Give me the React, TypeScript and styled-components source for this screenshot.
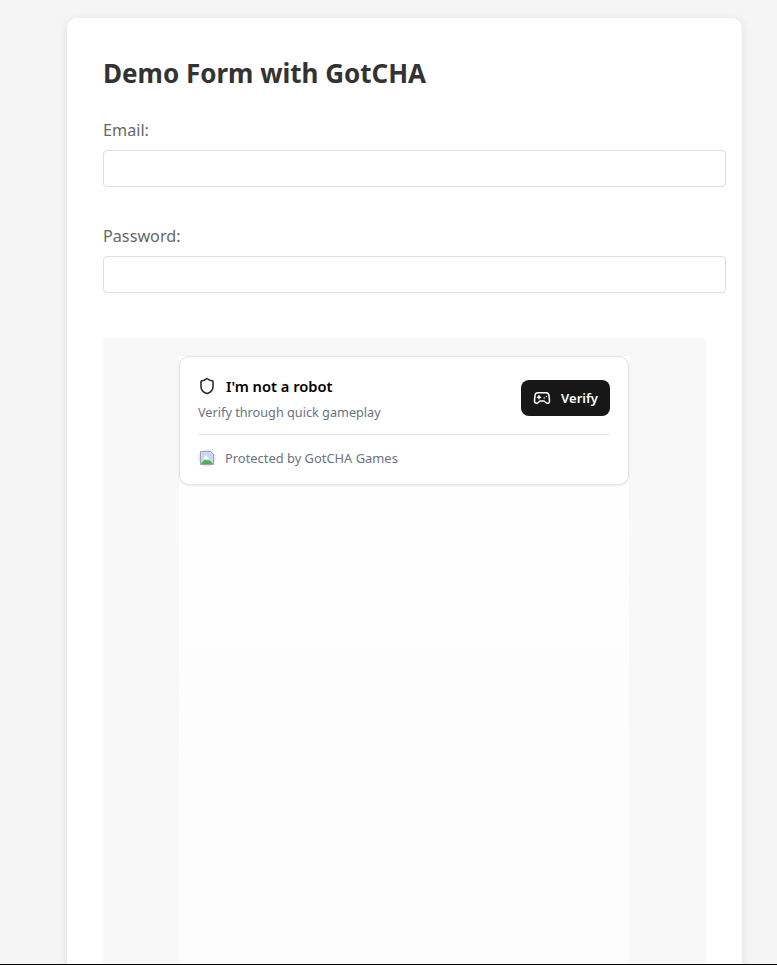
import styled, { createGlobalStyle } from "styled-components";
import { Gamepad2, Shield } from "lucide-react";

const GlobalStyle = createGlobalStyle`
  html, body {
    margin: 0;
    padding: 0;
    background: #f5f5f5;
    font-family: "Noto Sans", "Open Sans", sans-serif;
  }
  * {
    box-sizing: border-box;
  }
`;

const Page = styled.div`
  height: 965px;
  overflow: hidden;
  border-bottom: 1px solid #000;
  padding: 18px 35px 0 67px;
`;

const FormCard = styled.form`
  height: 960px;
  background: #fff;
  border-radius: 10px;
  padding: 35px 36px 0;
  box-shadow: 0 2px 10px rgba(0, 0, 0, 0.1);
`;

const Title = styled.h1`
  margin: 0 0 25px;
  font-size: 26px;
  line-height: 40px;
  font-weight: 700;
  color: #333;
`;

const Field = styled.div`
  margin-bottom: 37px;
`;

const Label = styled.label`
  display: block;
  font-size: 16.2px;
  line-height: 24px;
  color: #666;
  margin-bottom: 8px;
`;

const Input = styled.input`
  display: block;
  width: 623px;
  height: 37px;
  border: 1px solid #ddd;
  border-radius: 4px;
  background: #fff;
`;

const CaptchaArea = styled.div`
  margin-top: 45px;
  width: 603px;
  height: 640px;
  background: #f8f8f8;
  border-radius: 4px 4px 0 0;
  padding: 18px 1px 0 0;
  display: flex;
  justify-content: center;
`;

const CaptchaColumn = styled.div`
  width: 450px;
  background: linear-gradient(#fff, #fcfcfc);
`;

const Widget = styled.div`
  background: #fff;
  height: 129px;
  border: 1px solid #e5e5e5;
  border-radius: 10px;
  padding: 18px 18px 0;
  box-shadow: 0 1px 3px rgba(0, 0, 0, 0.08);
`;

const WidgetTop = styled.div`
  display: flex;
  justify-content: space-between;
  align-items: flex-start;
  height: 60px;
  border-bottom: 1px solid #e5e5e5;
`;

const Heading = styled.div`
  display: flex;
  align-items: center;
  gap: 10px;
  font-size: 14.7px;
  line-height: 22px;
  font-weight: 600;
  color: #000;
`;

const Subtext = styled.div`
  margin-top: 6px;
  font-size: 12.7px;
  line-height: 18px;
  color: #6b7280;
`;

const VerifyButton = styled.button`
  display: flex;
  align-items: center;
  justify-content: center;
  gap: 10px;
  width: 89px;
  height: 36px;
  margin-top: 5px;
  padding: 0;
  border: 0;
  border-radius: 8px;
  background: #171717;
  color: #fff;
  font-family: inherit;
  font-size: 13px;
  font-weight: 600;
`;

const WidgetFoot = styled.div`
  display: flex;
  align-items: center;
  gap: 9px;
  height: 46px;
  font-size: 12.9px;
  color: #6b7280;
`;

const BrokenImage = () => (
  <svg width="18" height="18" viewBox="0 0 18 18">
    <circle cx="9" cy="9" r="9" fill="#ececec" />
    <path d="M2.5 2.5h10l3 3v10h-13z" fill="#c9d7f2" stroke="#9aa3b2" />
    <path d="M3 15c2-3.5 4-5 6-3.5 2-1 4 0 6 3.5z" fill="#4caf50" />
    <path d="M5 10l3-4 3 4z" fill="#fff" />
  </svg>
);

export default function App() {
  return (
    <>
      <GlobalStyle />
      <Page>
        <FormCard>
          <Title>Demo Form with GotCHA</Title>
          <Field>
            <Label>Email:</Label>
            <Input type="email" />
          </Field>
          <Field>
            <Label>Password:</Label>
            <Input type="password" />
          </Field>
          <CaptchaArea>
            <CaptchaColumn>
              <Widget>
                <WidgetTop>
                  <div>
                    <Heading>
                      <Shield size={18} strokeWidth={2} color="#1f1f1f" />
                      I'm not a robot
                    </Heading>
                    <Subtext>Verify through quick gameplay</Subtext>
                  </div>
                  <VerifyButton type="button">
                    <Gamepad2 size={18} strokeWidth={2} />
                    Verify
                  </VerifyButton>
                </WidgetTop>
                <WidgetFoot>
                  <BrokenImage />
                  Protected by GotCHA Games
                </WidgetFoot>
              </Widget>
            </CaptchaColumn>
          </CaptchaArea>
        </FormCard>
      </Page>
    </>
  );
}
